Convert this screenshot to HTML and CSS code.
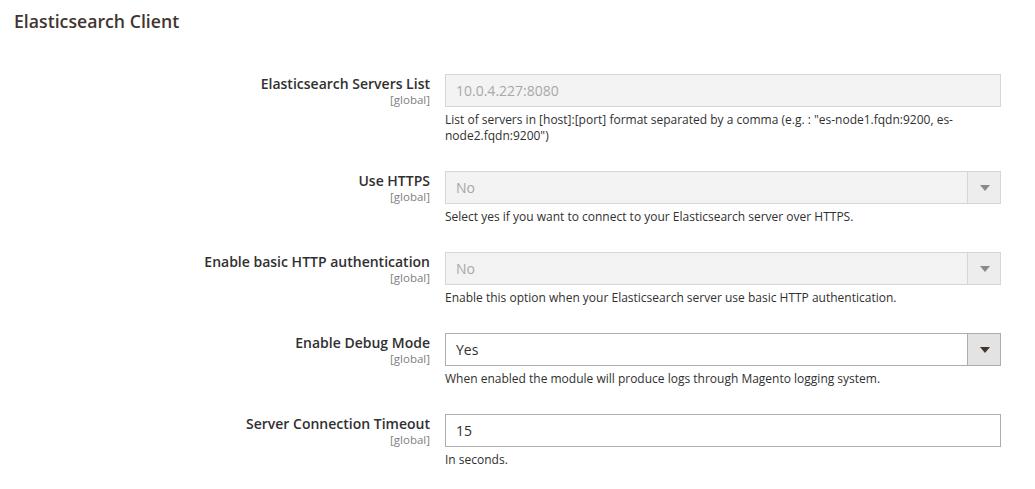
FILE: index.html
```html
<!DOCTYPE html>
<html>

<head>
  <meta charset="utf-8" />
  <title>Elasticsearch Client</title>
  <meta name="viewport" content="width=device-width, initial-scale=1">
  <link rel="stylesheet" href="styles.css">
</head>

<body>
  <h2 class="section-title">Elasticsearch Client</h2>
  <div class="config">
    <div class="row">
      <div class="label">
        <span class="label-text">Elasticsearch Servers List</span>
        <span class="scope">[global]</span>
      </div>
      <div class="value">
        <input type="text" class="field" value="10.0.4.227:8080" disabled>
        <p class="note">List of servers in [host]:[port] format separated by a comma (e.g. : "es-node1.fqdn:9200, es-node2.fqdn:9200")</p>
      </div>
    </div>
    <div class="row">
      <div class="label">
        <span class="label-text">Use HTTPS</span>
        <span class="scope">[global]</span>
      </div>
      <div class="value">
        <div class="select disabled">
          <span class="select-value">No</span>
          <span class="select-arrow"></span>
        </div>
        <p class="note">Select yes if you want to connect to your Elasticsearch server over HTTPS.</p>
      </div>
    </div>
    <div class="row">
      <div class="label">
        <span class="label-text">Enable basic HTTP authentication</span>
        <span class="scope">[global]</span>
      </div>
      <div class="value">
        <div class="select disabled">
          <span class="select-value">No</span>
          <span class="select-arrow"></span>
        </div>
        <p class="note">Enable this option when your Elasticsearch server use basic HTTP authentication.</p>
      </div>
    </div>
    <div class="row">
      <div class="label">
        <span class="label-text">Enable Debug Mode</span>
        <span class="scope">[global]</span>
      </div>
      <div class="value">
        <div class="select">
          <span class="select-value">Yes</span>
          <span class="select-arrow"></span>
        </div>
        <p class="note">When enabled the module will produce logs through Magento logging system.</p>
      </div>
    </div>
    <div class="row">
      <div class="label">
        <span class="label-text">Server Connection Timeout</span>
        <span class="scope">[global]</span>
      </div>
      <div class="value">
        <input type="text" class="field" value="15">
        <p class="note">In seconds.</p>
      </div>
    </div>
  </div>
</body>

</html>
```

FILE: styles.css
```css
body {
  margin: 0;
  background: #fff;
  font-family: "Open Sans", "Liberation Sans", sans-serif;
  color: #303030;
}

.section-title {
  margin: 0;
  padding: 10px 0 0 14px;
  font-size: 17.7px;
  font-weight: 600;
  line-height: 23px;
  color: #41362f;
}

.config {
  padding-top: 41px;
}

.row {
  display: flex;
  padding-bottom: 27px;
}

.label {
  width: 430px;
  display: flex;
  flex-direction: column;
  align-items: flex-end;
  padding-top: 1px;
}

.label-text {
  font-size: 14px;
  font-weight: 600;
  line-height: 18px;
  color: #303030;
}

.scope {
  font-size: 11.5px;
  line-height: 14px;
  color: #808080;
}

.value {
  width: 556px;
  margin-left: 15px;
}

.field,
.select {
  box-sizing: border-box;
  width: 100%;
  height: 33px;
  border: 1px solid #adadad;
  background: #fff;
  font-family: inherit;
  font-size: 14px;
  color: #303030;
  padding: 0 10px;
  margin: 0;
  outline: none;
}

.field:disabled {
  background: #f3f3f3;
  border-color: #d6d6d6;
  color: #a8a8a8;
}

.select {
  display: flex;
  align-items: center;
  padding-right: 0;
}

.select-value {
  flex: 1;
}

.select-arrow {
  width: 32px;
  height: 31px;
  border-left: 1px solid #adadad;
  background: #e3e3e3;
  position: relative;
}

.select-arrow::after {
  content: "";
  position: absolute;
  left: 12px;
  top: 13px;
  border-left: 5px solid transparent;
  border-right: 5px solid transparent;
  border-top: 6px solid #41362f;
}

.select.disabled {
  background: #f3f3f3;
  border-color: #d6d6d6;
  color: #a8a8a8;
}

.select.disabled .select-arrow {
  background: #ededed;
  border-left-color: #d6d6d6;
}

.select.disabled .select-arrow::after {
  border-top-color: #8a8a8a;
}

.note {
  margin: 5px 0 0;
  font-size: 12px;
  line-height: 16px;
  color: #303030;
}
```
